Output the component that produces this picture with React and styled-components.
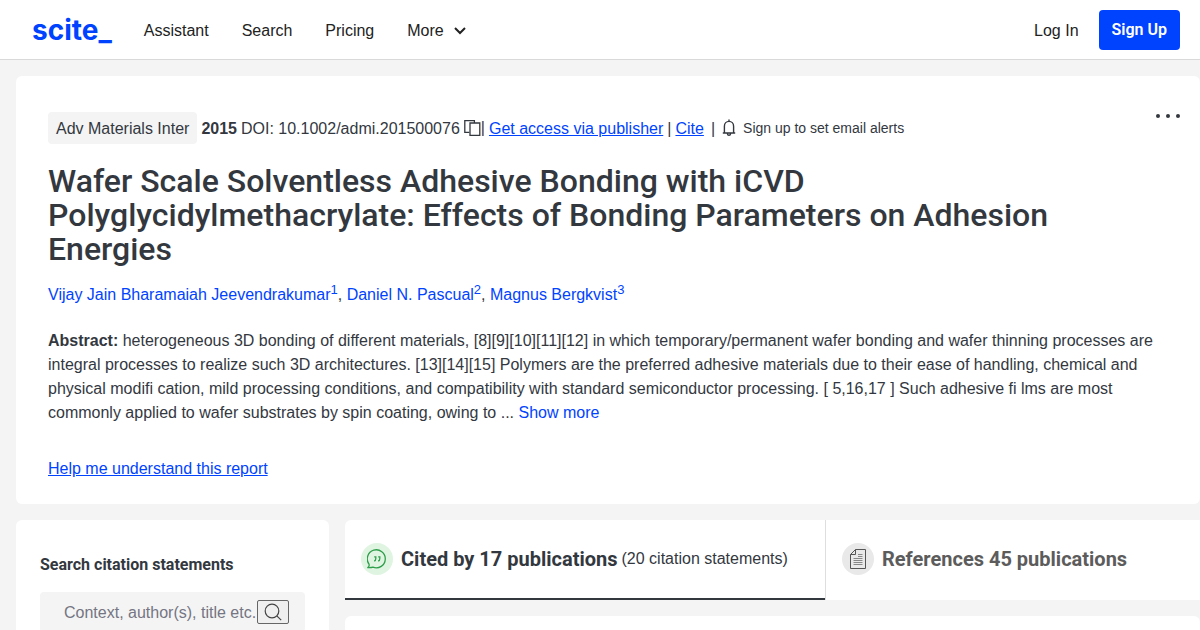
import React, { useState } from 'react';
import styled, { createGlobalStyle } from 'styled-components';

const GlobalStyle = createGlobalStyle`
	* {
		box-sizing: border-box;
	}
	body {
		margin: 0;
		background: #f4f4f4;
		color: #33383f;
		font-family: 'Liberation Sans', Arial, sans-serif;
		font-size: 16px;
		line-height: 24px;
		overflow: hidden;
	}
	button, input {
		font: inherit;
		color: inherit;
	}
`;

const Header = styled.header`
	display: flex;
	align-items: center;
	height: 60px;
	padding: 1px 20px 0 32px;
	background: #fff;
	border-bottom: 1px solid #d9d9d9;
`;

const Logo = styled.a`
	margin-right: 32px;
	color: #0043ff;
	font-family: Inter, sans-serif;
	font-size: 28px;
	font-weight: 700;
	line-height: 32px;
	text-decoration: none;
`;

const Nav = styled.nav`
	display: flex;
	flex: 1;
	gap: 33px;
`;

const NavLink = styled.a`
	padding-top: 2px;
	color: #222;
	text-decoration: none;
`;

const PlainButton = styled.button`
	display: inline-flex;
	align-items: center;
	gap: ${({ $gap }) => $gap || 0}px;
	padding: 0;
	border: 0;
	background: none;
	cursor: pointer;
`;

const MoreButton = styled(PlainButton)`
	padding-top: 2px;
	color: #222;
`;

const SignUp = styled.button`
	height: 40px;
	margin-left: 20px;
	padding: 0 13px;
	border: 0;
	border-radius: 4px;
	background: #0043ff;
	color: #fff;
	font-family: Roboto, sans-serif;
	font-weight: 600;
	cursor: pointer;
`;

const Page = styled.main`
	padding: 16px 0 0 16px;
`;

const Card = styled.section`
	border-radius: 6px;
	background: #fff;
`;

const Report = styled(Card)`
	padding: 36px 20px 23px 32px;
`;

const MetaRow = styled.div`
	display: flex;
	align-items: center;
	justify-content: space-between;
`;

const Meta = styled.div`
	display: flex;
	align-items: baseline;
	gap: 4px;
`;

const Journal = styled.span`
	padding: 5px 8px 3px;
	border-radius: 4px;
	background: #f4f4f4;
`;

const CopyDoi = styled.span`
	display: flex;
	align-self: center;
	align-items: center;
`;

const Divider = styled.span`
	margin: 0 3px;
`;

const MenuButton = styled(PlainButton)`
	align-self: flex-start;
`;

const Alerts = styled(PlainButton)`
	align-self: center;
	font-size: 14px;
`;

const Link = styled.a`
	color: #0043ff;
	text-decoration: ${({ $plain }) => ($plain ? 'none' : 'underline')};
`;

const Title = styled.h1`
	margin: 20px 0 0;
	max-width: 1040px;
	font-family: Roboto, sans-serif;
	font-size: 32px;
	font-weight: 500;
	line-height: 34px;
`;

const Authors = styled.div`
	margin-top: 17px;

	sup {
		font-size: 13px;
		line-height: 0;
	}
`;

const Abstract = styled.p`
	max-width: 1112px;
	margin: 22px 0 32px;
`;

const Columns = styled.div`
	display: grid;
	grid-template-columns: 313px 1fr;
	gap: 16px;
	margin-top: 16px;
`;

const SearchCard = styled(Card)`
	padding: 33px 24px 0;
`;

const SearchLabel = styled.label`
	display: block;
	margin-bottom: 15px;
	font-family: Roboto, sans-serif;
	font-weight: 700;
`;

const SearchBox = styled.div`
	display: flex;
	align-items: center;
	height: 40px;
	padding: 0 16px 0 24px;
	border-radius: 4px;
	background: #f4f4f4;
`;

const SearchInput = styled.input`
	flex: 1;
	min-width: 0;
	padding: 2px 0 0;
	border: 0;
	outline: 0;
	background: none;

	&::placeholder {
		color: #757583;
		opacity: 1;
	}
`;

const SearchButton = styled.button`
	display: flex;
	align-items: center;
	justify-content: center;
	width: 32px;
	height: 24px;
	padding: 0;
	border: 1px solid #666;
	border-radius: 2px;
	background: #efefef;
`;

const Tabs = styled.div`
	display: flex;
	height: 80px;
	overflow: hidden;
	border-radius: 6px 0 0 0;
	background: #fff;
`;

const TabDivider = styled.span`
	width: 1px;
	background: #dedede;
`;

const Tab = styled.button`
	display: flex;
	align-items: center;
	width: ${({ $wide }) => ($wide ? '480px' : 'auto')};
	padding: 0 16px;
	border: 0;
	border-bottom: 2px solid ${({ $active }) => ($active ? '#33383f' : 'transparent')};
	background: none;
	color: ${({ $active }) => ($active ? '#33383f' : '#5c5c5c')};
	cursor: pointer;
`;

const TabIcon = styled.span`
	display: flex;
	align-items: center;
	justify-content: center;
	width: 32px;
	height: 32px;
	margin-right: 8px;
	border-radius: 50%;
	background: ${({ $color }) => $color};
`;

const TabTitle = styled.span`
	margin-right: 4px;
	font-family: Roboto, sans-serif;
	font-size: 20px;
	font-weight: 700;
`;

const Results = styled(Card)`
	height: 80px;
	margin-top: 16px;
`;

const authors = [
	'Vijay Jain Bharamaiah Jeevendrakumar',
	'Daniel N. Pascual',
	'Magnus Bergkvist',
];

const Chevron = () => (
	<svg width='12' height='8' viewBox='0 0 12 8' fill='none' stroke='#222' strokeWidth='2'>
		<path d='M1 1l5 5 5-5' />
	</svg>
);

const CopyIcon = () => (
	<svg width='17' height='18' viewBox='0 0 17 18' fill='none' stroke='#33383f' strokeWidth='1.3'>
		<path d='M5.4 13.4H.8V1.6h9.6V4' />
		<path d='M6 4h9.8v12.4H6z' />
	</svg>
);

const BellIcon = () => (
	<svg width='14' height='18' viewBox='0 0 14 18' fill='none' stroke='#33383f' strokeWidth='1.4'>
		<path d='M7 .6v1.8M.8 14h12.4M2.4 14V7.2a4.6 4.8 0 0 1 9.2 0V14M5.4 14.6c.2 2.4 3 2.4 3.2 0' />
	</svg>
);

const DotsIcon = () => (
	<svg width='24' height='8' viewBox='0 0 24 8' fill='#33383f'>
		<circle cx='2' cy='4' r='2' />
		<circle cx='12' cy='4' r='2' />
		<circle cx='22' cy='4' r='2' />
	</svg>
);

const SearchIcon = () => (
	<svg width='18' height='18' viewBox='0 0 18 18' fill='none' stroke='#444' strokeWidth='1.2'>
		<circle cx='8' cy='8' r='6.8' />
		<path d='M12.8 12.8l4.4 4.4' />
	</svg>
);

const QuoteIcon = () => (
	<svg width='20' height='20' viewBox='0 0 20 20' fill='none' stroke='#2f9e4b' strokeWidth='1.3'>
		<path d='M.8 18.6c1.2-.9 1.7-2 1.2-3.5A9 9 0 1 1 6 18.2c-1.7.5-3.4.6-5.2.4z' strokeLinejoin='round' />
		<path d='M7.2 7.8h1.6v1.8q0 2-1.6 2.6M11.2 7.8h1.6v1.8q0 2-1.6 2.6' />
	</svg>
);

const DocumentIcon = () => (
	<svg width='16' height='20' viewBox='0 0 16 20' fill='none' stroke='#555'>
		<path d='M.5 5.5l5-5h10v19H.5zM5.5.5v5h-5' />
		<path d='M8 5.5h4.5M8 7.5h4.5M3.5 9.5h9M3.5 11.5h9M3.5 13.5h9M3.5 15.5h9' stroke='#888' />
	</svg>
);

const App = () => {
	const [activeTab, setActiveTab] = useState('cited');

	return (
		<>
			<GlobalStyle />
			<Header>
				<Logo href='#'>scite_</Logo>
				<Nav>
					<NavLink href='#'>Assistant</NavLink>
					<NavLink href='#'>Search</NavLink>
					<NavLink href='#'>Pricing</NavLink>
					<MoreButton $gap={10}>More <Chevron /></MoreButton>
				</Nav>
				<NavLink href='#'>Log In</NavLink>
				<SignUp>Sign Up</SignUp>
			</Header>
			<Page>
				<Report>
					<MetaRow>
						<Meta>
							<Journal>Adv Materials Inter</Journal>
							<strong>2015</strong>
							<span>DOI: 10.1002/admi.201500076</span>
							<CopyDoi>
								<PlainButton aria-label='Copy DOI'><CopyIcon /></PlainButton>
								<span>|</span>
							</CopyDoi>
							<Link href='#'>Get access via publisher</Link>
							<span>|</span>
							<Link href='#'>Cite</Link>
							<Divider>|</Divider>
							<Alerts $gap={7}><BellIcon /> Sign up to set email alerts</Alerts>
						</Meta>
						<MenuButton aria-label='More actions'><DotsIcon /></MenuButton>
					</MetaRow>
					<Title>
						Wafer Scale Solventless Adhesive Bonding with iCVD Polyglycidylmethacrylate: Effects of
						Bonding Parameters on Adhesion Energies
					</Title>
					<Authors>
						{authors.map((name, i) => (
							<React.Fragment key={name}>
								{i > 0 && ', '}
								<Link $plain href='#'>{name}<sup>{i + 1}</sup></Link>
							</React.Fragment>
						))}
					</Authors>
					<Abstract>
						<strong>Abstract:</strong> heterogeneous 3D bonding of different materials,
						[8][9][10][11][12] in which temporary/permanent wafer bonding and wafer thinning
						processes are integral processes to realize such 3D architectures. [13][14][15] Polymers
						are the preferred adhesive materials due to their ease of handling, chemical and physical
						modifi cation, mild processing conditions, and compatibility with standard semiconductor
						processing. [ 5,16,17 ] Such adhesive fi lms are most commonly applied to wafer
						substrates by spin coating, owing to ... <Link $plain href='#'>Show more</Link>
					</Abstract>
					<Link href='#'>Help me understand this report</Link>
				</Report>
				<Columns>
					<SearchCard>
						<SearchLabel htmlFor='citation-search'>Search citation statements</SearchLabel>
						<SearchBox>
							<SearchInput id='citation-search' placeholder='Context, author(s), title etc.' />
							<SearchButton aria-label='Search'><SearchIcon /></SearchButton>
						</SearchBox>
					</SearchCard>
					<div>
						<Tabs>
							<Tab $wide $active={activeTab === 'cited'} onClick={() => setActiveTab('cited')}>
								<TabIcon $color='#dff5e1'><QuoteIcon /></TabIcon>
								<TabTitle>Cited by 17 publications</TabTitle>
								<span>(20 citation statements)</span>
							</Tab>
							<TabDivider />
							<Tab $active={activeTab === 'references'} onClick={() => setActiveTab('references')}>
								<TabIcon $color='#e9e9e9'><DocumentIcon /></TabIcon>
								<TabTitle>References 45 publications</TabTitle>
							</Tab>
						</Tabs>
						<Results />
					</div>
				</Columns>
			</Page>
		</>
	);
};

export default App;
